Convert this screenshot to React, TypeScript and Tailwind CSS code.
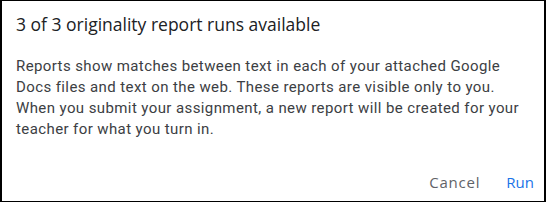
export default function App() {
  return (
    <div className="w-[546px] h-[202px] bg-white border-x-2 border-y border-black flex flex-col font-['Roboto',sans-serif]">
      <h2 className="pl-[14px] pt-[11px] text-[17.5px] leading-[24px] text-[#202124] font-['Open_Sans',sans-serif]">
        3 of 3 originality report runs available
      </h2>
      <p className="pl-[14px] pr-[20px] mt-[20px] text-[15px] leading-[21px] text-[#3c4043] tracking-[0.4px]">
        Reports show matches between text in each of your attached Google
        Docs files and text on the web. These reports are visible only to you.
        When you submit your assignment, a new report will be created for your
        teacher for what you turn in.
      </p>
      <div className="mt-auto mb-[1px] flex justify-end items-center gap-[10px] pr-[2px]">
        <button className="px-[8px] h-[36px] text-[15px] tracking-[0.8px] font-medium text-[#5f6368] font-['Open_Sans',sans-serif]">Cancel</button>
        <button className="px-[8px] h-[36px] text-[15px] font-medium text-[#1a73e8] font-['Open_Sans',sans-serif]">Run</button>
      </div>
    </div>
  );
}
